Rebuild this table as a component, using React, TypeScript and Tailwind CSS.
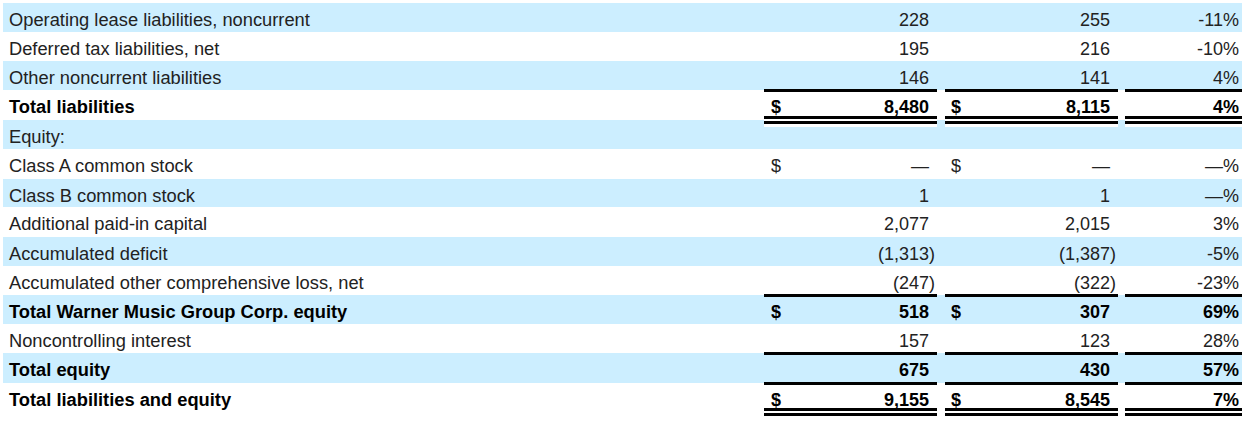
import React from "react";

type Row = {
  label: string;
  v1?: string;
  v2?: string;
  pct?: string;
  bold?: boolean;
  dollar?: boolean;
  blue?: boolean;
  top?: boolean;
  dbl?: boolean;
  h: string;
};

const rows: Row[] = [
  { label: "Operating lease liabilities, noncurrent", v1: "228", v2: "255", pct: "-11%", blue: true, h: "h-[29px]" },
  { label: "Deferred tax liabilities, net", v1: "195", v2: "216", pct: "-10%", h: "h-[29px]" },
  { label: "Other noncurrent liabilities", v1: "146", v2: "141", pct: "4%", blue: true, h: "h-[29px]" },
  { label: "Total liabilities", v1: "8,480", v2: "8,115", pct: "4%", bold: true, dollar: true, top: true, dbl: true, h: "h-[30px]" },
  { label: "Equity:", blue: true, h: "h-[29px]" },
  { label: "Class A common stock", v1: "—", v2: "—", pct: "—%", dollar: true, h: "h-[30px]" },
  { label: "Class B common stock", v1: "1", v2: "1", pct: "—%", blue: true, h: "h-[28px]" },
  { label: "Additional paid-in capital", v1: "2,077", v2: "2,015", pct: "3%", h: "h-[30px]" },
  { label: "Accumulated deficit", v1: "(1,313)", v2: "(1,387)", pct: "-5%", blue: true, h: "h-[29px]" },
  { label: "Accumulated other comprehensive loss, net", v1: "(247)", v2: "(322)", pct: "-23%", h: "h-[29px]" },
  { label: "Total Warner Music Group Corp. equity", v1: "518", v2: "307", pct: "69%", bold: true, dollar: true, blue: true, top: true, h: "h-[29px]" },
  { label: "Noncontrolling interest", v1: "157", v2: "123", pct: "28%", h: "h-[29px]" },
  { label: "Total equity", v1: "675", v2: "430", pct: "57%", bold: true, blue: true, top: true, h: "h-[30px]" },
  { label: "Total liabilities and equity", v1: "9,155", v2: "8,545", pct: "7%", bold: true, dollar: true, top: true, dbl: true, h: "h-[29px]" },
];

function Num({ v }: { v?: string }) {
  if (!v) return null;
  if (v.startsWith("(") && v.endsWith(")")) {
    return (
      <span className="whitespace-pre">
        {v.slice(0, -1)}
        <span className="mr-[-6px]">)</span>
      </span>
    );
  }
  return <span className="whitespace-pre">{v}</span>;
}

function Lines({ row }: { row: Row }) {
  return (
    <>
      {row.top && <div className="absolute left-0 right-0 top-[-1px] h-[3px] bg-black z-10" />}
      {row.dbl && (
        <div className="absolute left-0 right-0 top-[calc(100%-4px)] flex flex-col z-10">
          <div className="h-[8px] border-t-[3px] border-b-[3px] border-black bg-white" />
          <div className="h-[3px] bg-white" />
        </div>
      )}
    </>
  );
}

export default function App() {
  return (
    <div
      className="w-[1247px] h-[424px] bg-white pt-[3px] pl-[3px] text-[18px] leading-[20px] text-[#222222]"
      style={{ fontFamily: '"Liberation Sans", Arial, sans-serif' }}
    >
      {rows.map((r, i) => (
        <div
          key={i}
          className={`grid grid-cols-[761px_173px_8px_173px_7px_117px] w-[1239px] ${r.h} ${
            r.blue ? "bg-[#cceeff]" : "bg-white"
          } ${r.bold ? "font-bold text-black" : ""}`}
        >
          <div className="pl-[6px] pt-[6.5px] whitespace-nowrap text-[18.3px]">{r.label}</div>
          <div className="relative flex justify-between pl-[7px] pr-[8px] pt-[6.5px]">
            <span>{r.dollar ? "$" : ""}</span>
            <Num v={r.v1} />
            <Lines row={r} />
          </div>
          <div />
          <div className="relative flex justify-between pl-[6px] pr-[8px] pt-[6.5px]">
            <span>{r.dollar ? "$" : ""}</span>
            <Num v={r.v2} />
            <Lines row={r} />
          </div>
          <div />
          <div className="relative flex justify-end pr-[3px] pt-[6.5px]">
            <span>{r.pct}</span>
            <Lines row={r} />
          </div>
        </div>
      ))}
    </div>
  );
}
